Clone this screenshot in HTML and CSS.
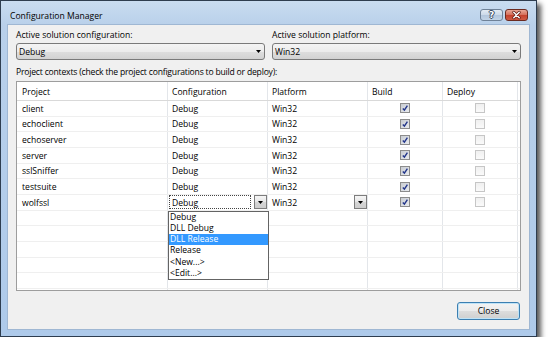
FILE: index.html
```html
<!DOCTYPE html>
<html lang="en">
<head>
<meta charset="utf-8">
<title>Configuration Manager</title>
<link rel="stylesheet" href="styles.css">
</head>
<body>
<div class="window">
  <div class="titlebar">
    <span class="title">Configuration Manager</span>
    <div class="caption">
      <div class="cap-btn cap-help"><span>?</span></div>
      <div class="cap-btn cap-close">
        <svg width="23" height="12" viewBox="0 0 23 12"><path d="M8.5 3 14.5 9M14.5 3 8.5 9" stroke="#5a1a12" stroke-width="3.2" stroke-linecap="round"/><path d="M8.5 3 14.5 9M14.5 3 8.5 9" stroke="#fff" stroke-width="1.6" stroke-linecap="round"/></svg>
      </div>
    </div>
  </div>
  <div class="client">
    <div class="selectors">
      <div class="field">
        <div class="label">Active solution configuration:</div>
        <div class="combo"><span>Debug</span><svg class="arrow" width="5" height="3" viewBox="0 0 5 3"><path d="M0 0H5L2.5 3Z" fill="#000"/></svg></div>
      </div>
      <div class="field">
        <div class="label">Active solution platform:</div>
        <div class="combo"><span>Win32</span><svg class="arrow" width="5" height="3" viewBox="0 0 5 3"><path d="M0 0H5L2.5 3Z" fill="#000"/></svg></div>
      </div>
    </div>
    <div class="label contexts">Project contexts (check the project configurations to build or deploy):</div>
    <div class="grid">
      <div class="row head"><div class="cell c1">Project</div><div class="cell">Configuration</div><div class="cell">Platform</div><div class="cell">Build</div><div class="cell">Deploy</div><div class="cell fill"></div></div>
      <div class="row"><div class="cell c1">client</div><div class="cell">Debug</div><div class="cell">Win32</div><div class="cell center"><span class="chk on"><svg width="8" height="8" viewBox="0 0 8 8"><path d="M1.8 4.4 3.4 6.1 6.4 1.6"/></svg></span></div><div class="cell center"><span class="chk"></span></div><div class="cell fill"></div></div>
      <div class="row"><div class="cell c1">echoclient</div><div class="cell">Debug</div><div class="cell">Win32</div><div class="cell center"><span class="chk on"><svg width="8" height="8" viewBox="0 0 8 8"><path d="M1.8 4.4 3.4 6.1 6.4 1.6"/></svg></span></div><div class="cell center"><span class="chk"></span></div><div class="cell fill"></div></div>
      <div class="row"><div class="cell c1">echoserver</div><div class="cell">Debug</div><div class="cell">Win32</div><div class="cell center"><span class="chk on"><svg width="8" height="8" viewBox="0 0 8 8"><path d="M1.8 4.4 3.4 6.1 6.4 1.6"/></svg></span></div><div class="cell center"><span class="chk"></span></div><div class="cell fill"></div></div>
      <div class="row"><div class="cell c1">server</div><div class="cell">Debug</div><div class="cell">Win32</div><div class="cell center"><span class="chk on"><svg width="8" height="8" viewBox="0 0 8 8"><path d="M1.8 4.4 3.4 6.1 6.4 1.6"/></svg></span></div><div class="cell center"><span class="chk"></span></div><div class="cell fill"></div></div>
      <div class="row"><div class="cell c1">sslSniffer</div><div class="cell">Debug</div><div class="cell">Win32</div><div class="cell center"><span class="chk on"><svg width="8" height="8" viewBox="0 0 8 8"><path d="M1.8 4.4 3.4 6.1 6.4 1.6"/></svg></span></div><div class="cell center"><span class="chk"></span></div><div class="cell fill"></div></div>
      <div class="row"><div class="cell c1">testsuite</div><div class="cell">Debug</div><div class="cell">Win32</div><div class="cell center"><span class="chk on"><svg width="8" height="8" viewBox="0 0 8 8"><path d="M1.8 4.4 3.4 6.1 6.4 1.6"/></svg></span></div><div class="cell center"><span class="chk"></span></div><div class="cell fill"></div></div>
      <div class="row">
        <div class="cell c1">wolfssl</div>
        <div class="cell edit">
          <div class="focusbox">Debug</div>
          <div class="ddbtn"><svg width="5" height="3" viewBox="0 0 5 3"><path d="M0 0H5L2.5 3Z" fill="#000"/></svg></div>
          <div class="dd-list">
            <div class="dd-item">Debug</div>
            <div class="dd-item">DLL Debug</div>
            <div class="dd-item sel">DLL Release</div>
            <div class="dd-item">Release</div>
            <div class="dd-item">&lt;New...&gt;</div>
            <div class="dd-item">&lt;Edit...&gt;</div>
          </div>
        </div>
        <div class="cell edit-plat"><span>Win32</span><div class="ddbtn"><svg width="5" height="3" viewBox="0 0 5 3"><path d="M0 0H5L2.5 3Z" fill="#000"/></svg></div></div>
        <div class="cell center"><span class="chk on"><svg width="8" height="8" viewBox="0 0 8 8"><path d="M1.8 4.4 3.4 6.1 6.4 1.6"/></svg></span></div>
        <div class="cell center"><span class="chk"></span></div>
        <div class="cell fill"></div>
      </div>
      <div class="row"><div class="cell c1"></div><div class="cell"></div><div class="cell"></div><div class="cell"></div><div class="cell"></div><div class="cell fill"></div></div>
      <div class="row"><div class="cell c1"></div><div class="cell"></div><div class="cell"></div><div class="cell"></div><div class="cell"></div><div class="cell fill"></div></div>
      <div class="row"><div class="cell c1"></div><div class="cell"></div><div class="cell"></div><div class="cell"></div><div class="cell"></div><div class="cell fill"></div></div>
      <div class="row"><div class="cell c1"></div><div class="cell"></div><div class="cell"></div><div class="cell"></div><div class="cell"></div><div class="cell fill"></div></div>
      <div class="row"><div class="cell c1"></div><div class="cell"></div><div class="cell"></div><div class="cell"></div><div class="cell"></div><div class="cell fill"></div></div>
      <div class="row"><div class="cell c1"></div><div class="cell"></div><div class="cell"></div><div class="cell"></div><div class="cell"></div><div class="cell fill"></div></div>
    </div>
    <div class="footer"><div class="btn">Close</div></div>
  </div>
</div>
</body>
</html>
```

FILE: styles.css
```css
* { box-sizing: border-box; }
html, body { margin: 0; padding: 0; background: #fff; }
body {
  font-family: "Open Sans", "Noto Sans", sans-serif;
  font-size: 8.6px;
  line-height: 12px;
  color: #000;
}
.window {
  width: 537px;
  height: 337px;
  border: 1px solid #2e3d4f;
  background: linear-gradient(to bottom, #c9dcf0 0px, #b9d0ea 24px, #aecaea 100%);
  box-shadow: 4px 4px 5px rgba(0, 0, 0, 0.65);
  display: flex;
  flex-direction: column;
  padding: 0 6px 6px 6px;
}
.titlebar {
  height: 23px;
  display: flex;
  justify-content: space-between;
  align-items: flex-start;
}
.title {
  margin: 9px 0 0 3px;
  line-height: 12px;
}
.caption {
  display: flex;
  gap: 2px;
  margin: 8px 2px 0 0;
}
.cap-btn {
  width: 23px;
  height: 12px;
  border-radius: 3px;
  display: flex;
  align-items: center;
  justify-content: center;
}
.cap-help {
  border: 1px solid #6f8298;
  background: linear-gradient(to bottom, #e3ebf4 0%, #cbd9e8 50%, #b3c6dc 51%, #c2d4e7 100%);
}
.cap-help span {
  font-family: "DejaVu Sans", sans-serif;
  font-weight: bold;
  font-size: 9px;
  line-height: 10px;
  color: #fff;
  text-shadow: 0 0 1px #2d3e55, 1px 0 0 #3c4f68, -1px 0 0 #3c4f68, 0 1px 0 #3c4f68, 0 -1px 0 #3c4f68;
}
.cap-close {
  border: 1px solid #6b2a20;
  background: linear-gradient(to bottom, #e9a797 0%, #d6735f 45%, #c4402c 50%, #cf5a43 100%);
}
.cap-close svg { display: block; }
.client {
  flex: 1;
  background: #f0f0f0;
  padding: 5px 9px 0 9px;
  display: flex;
  flex-direction: column;
  box-shadow: inset 0 0 0 1px #9fb7d3;
}
.selectors {
  display: flex;
  gap: 7px;
}
.field {
  flex: 1;
  display: flex;
  flex-direction: column;
}
.label {
  line-height: 12px;
  white-space: nowrap;
}
.combo {
  margin-top: 2px;
  height: 17px;
  border: 1px solid #7a7a7a;
  border-radius: 3px;
  background: linear-gradient(to bottom, #f4f4f4 0%, #ececec 50%, #dedede 51%, #d2d2d2 100%);
  display: flex;
  align-items: center;
  justify-content: space-between;
  padding: 0 3px 0 2px;
}
.combo .arrow { display: block; }
.contexts {
  margin-top: 6px;
  letter-spacing: -0.2px;
}
.grid {
  margin-top: 3px;
  height: 210px;
  border: 1px solid #9d9d9d;
  background: #fff;
  overflow: hidden;
}
.row {
  display: grid;
  grid-template-columns: 151px 100px 100px 75px 75px 1fr;
  height: 15.67px;
  border-bottom: 1px solid #efefef;
}
.row.head {
  height: 19px;
  border-bottom-color: #d9d9d9;
}
.row.head .cell { padding-top: 1px; }
.cell {
  border-right: 1px solid #e3e6ea;
  padding-left: 4px;
  padding-top: 1px;
  display: flex;
  align-items: center;
  white-space: nowrap;
  min-width: 0;
}
.cell.c1 { padding-left: 5px; }
.cell.fill { border-right: 0; }
.cell.center { justify-content: center; padding-left: 0; padding-top: 0; }
.chk {
  width: 10px;
  height: 10px;
  border: 1px solid #c6c6c6;
  background: linear-gradient(to bottom, #f0f0f0, #fafafa);
  display: flex;
  align-items: center;
  justify-content: center;
}
.chk.on {
  border-color: #8c8c8c;
  background: linear-gradient(to bottom right, #c8ccd2, #e9ebee);
}
.chk svg { display: block; }
.chk svg path {
  fill: none;
  stroke: #22358a;
  stroke-width: 1.4;
}
.cell.edit {
  position: relative;
  padding-left: 1px;
  padding-top: 0;
  overflow: visible;
}
.focusbox {
  width: 82px;
  height: 14px;
  border: 1px dotted #444;
  padding-left: 2px;
  padding-top: 1px;
  display: flex;
  align-items: center;
}
.ddbtn {
  margin-left: auto;
  width: 13px;
  height: 14px;
  border: 1px solid #7d7d7d;
  background: linear-gradient(to bottom, #f6f6f6 0%, #e6e6e6 50%, #d6d6d6 51%, #cdcdcd 100%);
  display: flex;
  align-items: center;
  justify-content: center;
}
.ddbtn svg { display: block; }
.cell.edit-plat { padding-right: 0; padding-top: 0; }
.cell.edit-plat span { padding-top: 1px; }
.dd-list {
  position: absolute;
  left: 0;
  top: calc(100% + 1.3px);
  width: 101px;
  height: 69px;
  border: 1px solid #646464;
  background: #fff;
  z-index: 5;
}
.dd-item {
  height: 11.17px;
  line-height: 11px;
  padding-left: 1px;
  white-space: nowrap;
}
.dd-item.sel {
  background: #3399ff;
  color: #fff;
}
.footer {
  display: flex;
  justify-content: flex-end;
  margin-top: 11px;
  padding-right: 1px;
}
.btn {
  width: 63px;
  height: 18px;
  border: 1px solid #3c7fb1;
  border-radius: 3px;
  background: linear-gradient(to bottom, #f3f3f3 0%, #ebebeb 50%, #dddddd 51%, #cfcfcf 100%);
  box-shadow: inset 0 0 0 1px #bfe3f7;
  display: flex;
  align-items: center;
  justify-content: center;
}
```
